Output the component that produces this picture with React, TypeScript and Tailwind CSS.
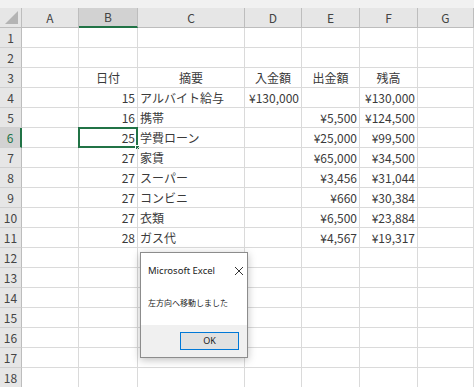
import React from "react";

const cols = ["A", "B", "C", "D", "E", "F", "G"];
const widths = ["w-[57px]", "w-[59px]", "w-[107px]", "w-[57px]", "w-[58px]", "w-[58px]", "w-[56px]"];

type Row = { b?: string; c?: string; d?: string; e?: string; f?: string; head?: boolean };

const rows: Row[] = [
  {},
  {},
  { b: "日付", c: "摘要", d: "入金額", e: "出金額", f: "残高", head: true },
  { b: "15", c: "アルバイト給与", d: "¥130,000", f: "¥130,000" },
  { b: "16", c: "携帯", e: "¥5,500", f: "¥124,500" },
  { b: "25", c: "学費ローン", e: "¥25,000", f: "¥99,500" },
  { b: "27", c: "家賃", e: "¥65,000", f: "¥34,500" },
  { b: "27", c: "スーパー", e: "¥3,456", f: "¥31,044" },
  { b: "27", c: "コンビニ", e: "¥660", f: "¥30,384" },
  { b: "27", c: "衣類", e: "¥6,500", f: "¥23,884" },
  { b: "28", c: "ガス代", e: "¥4,567", f: "¥19,317" },
  {},
  {},
  {},
  {},
  {},
  {},
  {},
];

const font = { fontFamily: '"Noto Sans CJK JP", "Noto Sans", sans-serif' };

const Cell: React.FC<{ w: string; align?: string; children?: React.ReactNode; sel?: boolean }> = ({
  w,
  align = "justify-end",
  children,
  sel,
}) => (
  <div
    className={`${w} h-[20px] shrink-0 border-r border-b border-[#dadada] flex items-center ${align} px-[2px] text-[12px] text-[#3a3a3a] whitespace-nowrap relative`}
  >
    {children}
    {sel && (
      <>
        <div className="absolute -left-px -top-px w-[60px] h-[21px] border-2 border-[#217346]" />
        <div className="absolute -right-[3px] -bottom-[3px] w-[5px] h-[5px] bg-[#217346] border border-white" />
      </>
    )}
  </div>
);

const App: React.FC = () => {
  return (
    <div className="w-[474px] h-[387px] overflow-hidden bg-white relative" style={font}>
      <div className="h-[8px] bg-[#f1f1f1]" />
      {/* column headers */}
      <div className="flex h-[20px]">
        <div className="w-[22px] shrink-0 bg-[#e6e6e6] border-r border-b border-[#bdbdbd] relative">
          <div
            className="absolute right-[3px] bottom-[3px] w-[13px] h-[13px] bg-[#b4b4b4]"
            style={{ clipPath: "polygon(100% 0, 100% 100%, 0 100%)" }}
          />
        </div>
        {cols.map((c, i) => (
          <div
            key={c}
            className={`${widths[i]} shrink-0 flex items-center justify-center text-[12px] border-r ${
              c === "B"
                ? "bg-[#d2d2d2] border-b-2 border-b-[#217346] border-r-[#bdbdbd] text-[#444]"
                : "bg-[#e6e6e6] border-b border-[#bdbdbd] text-[#444]"
            }`}
          >
            {c}
          </div>
        ))}
      </div>
      {rows.map((r, i) => {
        const n = i + 1;
        const sel = n === 6;
        return (
          <div key={n} className="flex h-[20px]">
            <div
              className={`w-[22px] shrink-0 flex items-center justify-center text-[12px] border-b border-[#d0d0d0] ${
                sel
                  ? "bg-[#d2d2d2] border-r-2 border-r-[#217346] text-[#217346]"
                  : "bg-[#e6e6e6] border-r border-r-[#bdbdbd] text-[#444]"
              }`}
            >
              {n}
            </div>
            <Cell w={widths[0]} />
            <Cell w={widths[1]} align={r.head ? "justify-center" : "justify-end"} sel={sel}>
              {r.b}
            </Cell>
            <Cell w={widths[2]} align={r.head ? "justify-center" : "justify-start"}>
              {r.c}
            </Cell>
            <Cell w={widths[3]} align={r.head ? "justify-center" : "justify-end"}>
              {r.d}
            </Cell>
            <Cell w={widths[4]} align={r.head ? "justify-center" : "justify-end"}>
              {r.e}
            </Cell>
            <Cell w={widths[5]} align={r.head ? "justify-center" : "justify-end"}>
              {r.f}
            </Cell>
            <Cell w={widths[6]} />
          </div>
        );
      })}

      {/* message box */}
      <div className="absolute left-[140px] top-[252px] w-[108px] h-[106px] bg-white border border-[#8c8c8c] shadow-[0_2px_8px_rgba(0,0,0,0.25)] flex flex-col">
        <div className="flex items-center justify-between pl-[7px] pr-[3px] pt-[8px] h-[28px]">
          <span className="text-[9.5px] text-[#222]" style={{ fontFamily: '"Noto Sans", sans-serif' }}>
            Microsoft Excel
          </span>
          <svg width="10" height="10" viewBox="0 0 10 10" className="stroke-[#333]">
            <path d="M1 1 L9 9 M9 1 L1 9" strokeWidth="1" />
          </svg>
        </div>
        <div className="flex-1 flex items-center pl-[7px] text-[8px] text-[#222]">左方向へ移動しました</div>
        <div className="h-[32px] bg-[#f0f0f0] flex items-center justify-end pr-[8px]">
          <div
            className="w-[59px] h-[18px] bg-[#e1e1e1] border border-[#0078d7] flex items-center justify-center text-[9px] text-[#222]"
            style={{ fontFamily: '"Noto Sans", sans-serif' }}
          >
            OK
          </div>
        </div>
      </div>
    </div>
  );
};

export default App;
